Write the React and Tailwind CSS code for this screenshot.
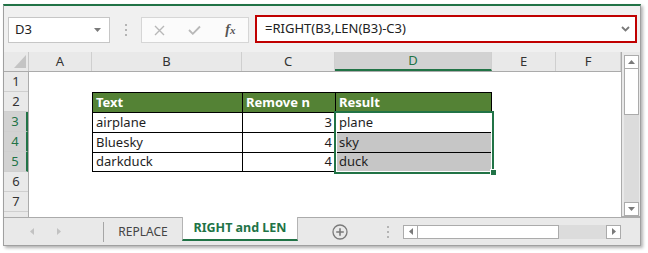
import React from "react";

const COLS = [
  { k: "A", w: "w-[63px]" },
  { k: "B", w: "w-[150px]" },
  { k: "C", w: "w-[93px]" },
  { k: "D", w: "w-[157px]" },
  { k: "E", w: "w-[64px]" },
  { k: "F", w: "w-[65px]" },
];

function TriDown({ className = "" }) {
  return (
    <svg width="7" height="4" viewBox="0 0 7 4" className={className}>
      <polygon points="0,0 7,0 3.5,4" fill="#7a7a7a" />
    </svg>
  );
}

function Dots() {
  return (
    <div className="flex flex-col gap-[3px]">
      <div className="w-[2px] h-[2px] bg-[#b4b4b4]" />
      <div className="w-[2px] h-[2px] bg-[#b4b4b4]" />
      <div className="w-[2px] h-[2px] bg-[#b4b4b4]" />
    </div>
  );
}

function Cell({ w, children, className = "" }) {
  return <div className={`${w} h-full flex items-center shrink-0 ${className}`}>{children}</div>;
}

export default function App() {
  const rows = [1, 2, 3, 4, 5, 6, 7];
  return (
    <div className="w-[648px] h-[253px] bg-white pt-[4px] pl-[3px] font-['Noto_Sans',sans-serif] text-[13px] text-[#1e1e1e]">
      <div className="w-[638px] h-[242px] border-t-2 border-t-[#217346] border-x border-x-[#a0a0a0] border-b border-b-[#a0a0a0] shadow-[2px_2px_3px_rgba(0,0,0,0.3)] flex flex-col bg-[#f0f0f0]">
        {/* Formula toolbar */}
        <div className="h-[46px] flex items-start shrink-0">
          <div className="ml-[4px] mt-[11px] w-[102px] h-[26px] bg-white border border-[#c6c6c6] flex items-center justify-between pl-[6px] pr-[8px]">
            <span className="text-[13px] text-[#222]">D3</span>
            <TriDown />
          </div>
          <div className="w-[31px] h-[46px] flex items-center justify-center pt-[2px]">
            <Dots />
          </div>
          <div className="mt-[11px] w-[108px] h-[26px] bg-[#fbfbfb] border border-[#d6d6d6] flex items-center">
            <div className="w-[36px] flex justify-center">
              <svg width="11" height="11" viewBox="0 0 11 11">
                <path d="M1 1L10 10M10 1L1 10" stroke="#b8b8b8" strokeWidth="1.4" fill="none" />
              </svg>
            </div>
            <div className="w-[36px] flex justify-center">
              <svg width="13" height="10" viewBox="0 0 13 10">
                <path d="M1 5L4.8 8.8L12 1.5" stroke="#b8b8b8" strokeWidth="1.8" fill="none" />
              </svg>
            </div>
            <div className="w-[36px] flex justify-center">
              <span className="italic font-['Liberation_Serif',serif] text-[14px] font-bold text-[#555] leading-none">
                f<span className="text-[11px]">x</span>
              </span>
            </div>
          </div>
          <div className="ml-[6px] mt-[9px] w-[382px] h-[28px] bg-white border-2 border-[#c00000] flex items-center justify-between pl-[8px] pr-[5px]">
            <span className="text-[13px] text-[#222]">=RIGHT(B3,LEN(B3)-C3)</span>
            <svg width="9" height="6" viewBox="0 0 9 6">
              <path d="M1 1L4.5 4.5L8 1" stroke="#7a7a7a" strokeWidth="1.8" fill="none" />
            </svg>
          </div>
        </div>

        {/* Sheet area */}
        <div className="h-[165px] flex shrink-0">
          <div className="w-[617px] flex flex-col">
            {/* Column headers */}
            <div className="h-[20px] flex bg-[#e9e9e9] border-b border-b-[#ababab] text-[13px] text-[#333]">
              <div className="w-[25px] h-full border-r border-r-[#c8c8c8] flex items-end justify-end pr-[2px] pb-[3px]">
                <svg width="12" height="13" viewBox="0 0 12 13">
                  <polygon points="12,0 12,13 0,13" fill="#c4c4c4" />
                </svg>
              </div>
              {COLS.map((c) => (
                <div
                  key={c.k}
                  className={`${c.w} h-full flex items-center justify-center border-r border-r-[#cfcfcf] ${
                    c.k === "D" ? "bg-[#d2d2d2] border-b-2 border-b-[#217346] text-[#217346]" : ""
                  }`}
                >
                  {c.k}
                </div>
              ))}
            </div>
            {/* Body */}
            <div className="relative flex-1 flex">
              <div className="w-[25px] flex flex-col bg-[#e9e9e9] border-r border-r-[#ababab] text-[#333]">
                {rows.map((r) => (
                  <div
                    key={r}
                    className={`h-[20px] shrink-0 flex items-center justify-center border-b border-b-[#cfcfcf] ${
                      r >= 3 && r <= 5 ? "bg-[#d2d2d2] border-r-2 border-r-[#217346] text-[#217346]" : ""
                    }`}
                  >
                    {r}
                  </div>
                ))}
              </div>
              <div className="flex-1 bg-white flex flex-col">
                <div className="h-[20px] shrink-0" />
                {/* row 2 header */}
                <div className="h-[20px] shrink-0 flex">
                  <Cell w="w-[63px]" />
                  <Cell w="w-[150px]" className="bg-[#548235] border-t border-l border-black pl-[3px] font-bold text-white">
                    Text
                  </Cell>
                  <Cell w="w-[93px]" className="bg-[#548235] border-t border-l border-black pl-[3px] font-bold text-white">
                    Remove n
                  </Cell>
                  <Cell w="w-[157px]" className="bg-[#548235] border-t border-l border-r border-black pl-[3px] font-bold text-white">
                    Result
                  </Cell>
                </div>
                {[
                  ["airplane", "3", "plane", false],
                  ["Bluesky", "4", "sky", true],
                  ["darkduck", "4", "duck", true],
                ].map(([b, c, d, sel], i) => (
                  <div key={b} className="h-[20px] shrink-0 flex">
                    <Cell w="w-[63px]" />
                    <Cell w="w-[150px]" className={`border-t border-l border-black pl-[3px] ${i === 2 ? "border-b" : ""}`}>
                      {b}
                    </Cell>
                    <Cell w="w-[93px]" className={`border-t border-l border-black pr-[3px] justify-end ${i === 2 ? "border-b" : ""}`}>
                      {c}
                    </Cell>
                    <Cell
                      w="w-[157px]"
                      className={`border-t border-l border-r border-black pl-[3px] ${i === 2 ? "border-b" : ""} ${
                        sel ? "bg-[#c6c6c6]" : ""
                      }`}
                    >
                      {d}
                    </Cell>
                  </div>
                ))}
              </div>
              {/* selection overlay */}
              <div className="absolute left-[330px] top-[39px] w-[160px] h-[63px] border-2 border-[#217346] shadow-[inset_0_0_0_1px_white]" />
              <div className="absolute left-[486px] top-[97px] w-[7px] h-[7px] bg-[#217346] border border-white" />
            </div>
          </div>
          {/* Vertical scrollbar */}
          <div className="w-[19px] bg-[#e9e9e9] border-l border-l-[#ababab] flex flex-col items-start pl-[2px] pt-[3px] border-b border-b-[#ababab]">
            <div className="w-[15px] h-[14px] bg-white border border-[#ababab] flex items-center justify-center">
              <svg width="7" height="4" viewBox="0 0 7 4">
                <polygon points="0,4 7,4 3.5,0" fill="#7a7a7a" />
              </svg>
            </div>
            <div className="w-[15px] h-[46px] bg-white border border-[#ababab] border-t-0" />
            <div className="w-[15px] flex-1 bg-[#dcdcdc]" />
            <div className="w-[15px] h-[14px] bg-white border border-[#ababab] flex items-center justify-center">
              <TriDown />
            </div>
          </div>
        </div>

        {/* Tab bar */}
        <div className="flex-1 flex bg-[#e9e9e9] border-t border-t-[#ababab]">
          <div className="w-[99px] flex items-center pl-[26px] gap-[23px]">
            <svg width="4" height="7" viewBox="0 0 4 7">
              <polygon points="4,0 4,7 0,3.5" fill="#c2c2c2" />
            </svg>
            <svg width="4" height="7" viewBox="0 0 4 7">
              <polygon points="0,0 0,7 4,3.5" fill="#c2c2c2" />
            </svg>
          </div>
          <div className="flex items-center">
            <div className="w-[1px] h-[20px] bg-[#a6a6a6]" />
          </div>
          <div className="w-[78px] flex items-center justify-center text-[12px] text-[#444]">REPLACE</div>
          <div className="w-[116px] h-[24px] bg-white border-x border-x-[#b4b4b4] border-b-2 border-b-[#217346] flex items-center justify-center text-[12.5px] font-bold text-[#217346] -mt-px">
            RIGHT and LEN
          </div>
          <div className="w-[105px] flex items-center pl-[34px]">
            <svg width="16" height="16" viewBox="0 0 16 16">
              <circle cx="8" cy="8" r="7" stroke="#7a7a7a" strokeWidth="1.3" fill="none" />
              <path d="M8 4.2V11.8M4.2 8H11.8" stroke="#7a7a7a" strokeWidth="1.6" />
            </svg>
            <div className="ml-[39px]">
              <Dots />
            </div>
          </div>
          <div className="w-[218px] flex items-center">
            <div className="w-[15px] h-[14px] bg-white border border-[#ababab] flex items-center justify-center">
              <svg width="4" height="7" viewBox="0 0 4 7">
                <polygon points="4,0 4,7 0,3.5" fill="#7a7a7a" />
              </svg>
            </div>
            <div className="w-[141px] h-[14px] bg-white border border-[#ababab] border-l-0" />
            <div className="w-[47px] h-[14px] bg-[#dcdcdc]" />
            <div className="w-[15px] h-[14px] bg-white border border-[#ababab] flex items-center justify-center">
              <svg width="4" height="7" viewBox="0 0 4 7">
                <polygon points="0,0 0,7 4,3.5" fill="#7a7a7a" />
              </svg>
            </div>
          </div>
        </div>
      </div>
    </div>
  );
}
